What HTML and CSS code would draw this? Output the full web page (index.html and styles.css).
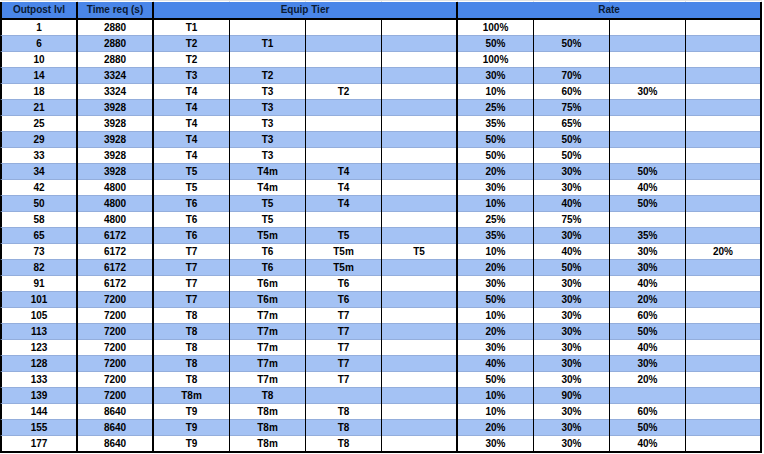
FILE: index.html
```html
<!DOCTYPE html>
<html>
<head>
<meta charset="utf-8">
<link rel="stylesheet" href="styles.css">
</head>
<body>
<div class="sheet">
  <div class="row top">
    <div class="g"></div><div class="g"></div><div class="g"></div><div class="g"></div><div class="g"></div>
    <div class="g"></div><div class="g"></div><div class="g"></div><div class="g"></div><div class="g"></div>
  </div>
  <div class="head">
    <div class="hc">Outpost lvl</div>
    <div class="hc">Time req (s)</div>
    <div class="hc">Equip Tier</div>
    <div class="hc">Rate</div>
  </div>
  <div class="row w"><div class="c k">1</div><div class="c k">2880</div><div class="c">T1</div><div class="c"></div><div class="c"></div><div class="c k">&nbsp;</div><div class="c">100%</div><div class="c"></div><div class="c"></div><div class="c k"></div></div>
  <div class="row b"><div class="c k">6</div><div class="c k">2880</div><div class="c">T2</div><div class="c">T1</div><div class="c"></div><div class="c k"></div><div class="c">50%</div><div class="c">50%</div><div class="c"></div><div class="c k"></div></div>
  <div class="row w"><div class="c k">10</div><div class="c k">2880</div><div class="c">T2</div><div class="c"></div><div class="c"></div><div class="c k"></div><div class="c">100%</div><div class="c"></div><div class="c"></div><div class="c k"></div></div>
  <div class="row b"><div class="c k">14</div><div class="c k">3324</div><div class="c">T3</div><div class="c">T2</div><div class="c"></div><div class="c k"></div><div class="c">30%</div><div class="c">70%</div><div class="c"></div><div class="c k"></div></div>
  <div class="row w"><div class="c k">18</div><div class="c k">3324</div><div class="c">T4</div><div class="c">T3</div><div class="c">T2</div><div class="c k"></div><div class="c">10%</div><div class="c">60%</div><div class="c">30%</div><div class="c k"></div></div>
  <div class="row b"><div class="c k">21</div><div class="c k">3928</div><div class="c">T4</div><div class="c">T3</div><div class="c"></div><div class="c k"></div><div class="c">25%</div><div class="c">75%</div><div class="c"></div><div class="c k"></div></div>
  <div class="row w"><div class="c k">25</div><div class="c k">3928</div><div class="c">T4</div><div class="c">T3</div><div class="c"></div><div class="c k"></div><div class="c">35%</div><div class="c">65%</div><div class="c"></div><div class="c k"></div></div>
  <div class="row b"><div class="c k">29</div><div class="c k">3928</div><div class="c">T4</div><div class="c">T3</div><div class="c"></div><div class="c k"></div><div class="c">50%</div><div class="c">50%</div><div class="c"></div><div class="c k"></div></div>
  <div class="row w"><div class="c k">33</div><div class="c k">3928</div><div class="c">T4</div><div class="c">T3</div><div class="c"></div><div class="c k"></div><div class="c">50%</div><div class="c">50%</div><div class="c"></div><div class="c k"></div></div>
  <div class="row b"><div class="c k">34</div><div class="c k">3928</div><div class="c">T5</div><div class="c">T4m</div><div class="c">T4</div><div class="c k"></div><div class="c">20%</div><div class="c">30%</div><div class="c">50%</div><div class="c k"></div></div>
  <div class="row w"><div class="c k">42</div><div class="c k">4800</div><div class="c">T5</div><div class="c">T4m</div><div class="c">T4</div><div class="c k"></div><div class="c">30%</div><div class="c">30%</div><div class="c">40%</div><div class="c k"></div></div>
  <div class="row b"><div class="c k">50</div><div class="c k">4800</div><div class="c">T6</div><div class="c">T5</div><div class="c">T4</div><div class="c k"></div><div class="c">10%</div><div class="c">40%</div><div class="c">50%</div><div class="c k"></div></div>
  <div class="row w"><div class="c k">58</div><div class="c k">4800</div><div class="c">T6</div><div class="c">T5</div><div class="c"></div><div class="c k"></div><div class="c">25%</div><div class="c">75%</div><div class="c"></div><div class="c k"></div></div>
  <div class="row b"><div class="c k">65</div><div class="c k">6172</div><div class="c">T6</div><div class="c">T5m</div><div class="c">T5</div><div class="c k"></div><div class="c">35%</div><div class="c">30%</div><div class="c">35%</div><div class="c k"></div></div>
  <div class="row w"><div class="c k">73</div><div class="c k">6172</div><div class="c">T7</div><div class="c">T6</div><div class="c">T5m</div><div class="c k">T5</div><div class="c">10%</div><div class="c">40%</div><div class="c">30%</div><div class="c k">20%</div></div>
  <div class="row b"><div class="c k">82</div><div class="c k">6172</div><div class="c">T7</div><div class="c">T6</div><div class="c">T5m</div><div class="c k"></div><div class="c">20%</div><div class="c">50%</div><div class="c">30%</div><div class="c k"></div></div>
  <div class="row w"><div class="c k">91</div><div class="c k">6172</div><div class="c">T7</div><div class="c">T6m</div><div class="c">T6</div><div class="c k"></div><div class="c">30%</div><div class="c">30%</div><div class="c">40%</div><div class="c k"></div></div>
  <div class="row b"><div class="c k">101</div><div class="c k">7200</div><div class="c">T7</div><div class="c">T6m</div><div class="c">T6</div><div class="c k"></div><div class="c">50%</div><div class="c">30%</div><div class="c">20%</div><div class="c k"></div></div>
  <div class="row w"><div class="c k">105</div><div class="c k">7200</div><div class="c">T8</div><div class="c">T7m</div><div class="c">T7</div><div class="c k"></div><div class="c">10%</div><div class="c">30%</div><div class="c">60%</div><div class="c k"></div></div>
  <div class="row b"><div class="c k">113</div><div class="c k">7200</div><div class="c">T8</div><div class="c">T7m</div><div class="c">T7</div><div class="c k"></div><div class="c">20%</div><div class="c">30%</div><div class="c">50%</div><div class="c k"></div></div>
  <div class="row w"><div class="c k">123</div><div class="c k">7200</div><div class="c">T8</div><div class="c">T7m</div><div class="c">T7</div><div class="c k"></div><div class="c">30%</div><div class="c">30%</div><div class="c">40%</div><div class="c k"></div></div>
  <div class="row b"><div class="c k">128</div><div class="c k">7200</div><div class="c">T8</div><div class="c">T7m</div><div class="c">T7</div><div class="c k"></div><div class="c">40%</div><div class="c">30%</div><div class="c">30%</div><div class="c k"></div></div>
  <div class="row w"><div class="c k">133</div><div class="c k">7200</div><div class="c">T8</div><div class="c">T7m</div><div class="c">T7</div><div class="c k"></div><div class="c">50%</div><div class="c">30%</div><div class="c">20%</div><div class="c k"></div></div>
  <div class="row b"><div class="c k">139</div><div class="c k">7200</div><div class="c">T8m</div><div class="c">T8</div><div class="c"></div><div class="c k"></div><div class="c">10%</div><div class="c">90%</div><div class="c"></div><div class="c k"></div></div>
  <div class="row w"><div class="c k">144</div><div class="c k">8640</div><div class="c">T9</div><div class="c">T8m</div><div class="c">T8</div><div class="c k"></div><div class="c">10%</div><div class="c">30%</div><div class="c">60%</div><div class="c k"></div></div>
  <div class="row b"><div class="c k">155</div><div class="c k">8640</div><div class="c">T9</div><div class="c">T8m</div><div class="c">T8</div><div class="c k"></div><div class="c">20%</div><div class="c">30%</div><div class="c">50%</div><div class="c k"></div></div>
  <div class="row w last"><div class="c k">177</div><div class="c k">8640</div><div class="c">T9</div><div class="c">T8m</div><div class="c">T8</div><div class="c k"></div><div class="c">30%</div><div class="c">30%</div><div class="c">40%</div><div class="c k"></div></div>
</div>
</body>
</html>
```
FILE: styles.css
```css
html, body {
  margin: 0;
  padding: 0;
  background: #ffffff;
}

body {
  font-family: "Liberation Sans", Arial, sans-serif;
  font-size: 10px;
  font-weight: bold;
  color: #000000;
}

.sheet {
  width: 764px;
}

.row {
  display: grid;
  grid-template-columns: repeat(10, 76px);
  grid-template-rows: 15px;
  width: 760px;
  border-left: 2px solid #000;
  border-bottom: 1px solid #94aedc;
}

.row.w { background: #ffffff; }
.row.b { background: #a4c2f4; }

.row.last {
  border-bottom: 2px solid #000;
}

.row.top {
  grid-template-rows: 1px;
  border-left: 2px solid #ffffff;
  border-top: 1px solid #e2e3e3;
  border-bottom: none;
  background: #ffffff;
}

.g {
  border-right: 1px solid #e2e3e3;
}

.c {
  box-sizing: border-box;
  height: 16px;
  line-height: 15px;
  text-align: center;
  border-right: 1px solid #000;
  white-space: nowrap;
  overflow: visible;
}

.c.k {
  border-right-width: 2px;
}

.row .c:nth-child(6),
.row .c:nth-child(10) {
  border-right-width: 2px;
}

.head {
  display: grid;
  grid-template-columns: 76px 76px 304px 304px;
  grid-template-rows: 16px;
  width: 760px;
  background: #4a86e8;
  border-left: 2px solid #000;
  border-bottom: 2px solid #000;
}

.hc {
  box-sizing: border-box;
  height: 18px;
  line-height: 16px;
  text-align: center;
  border-right: 2px solid #000;
  color: #0b1a33;
}
```
